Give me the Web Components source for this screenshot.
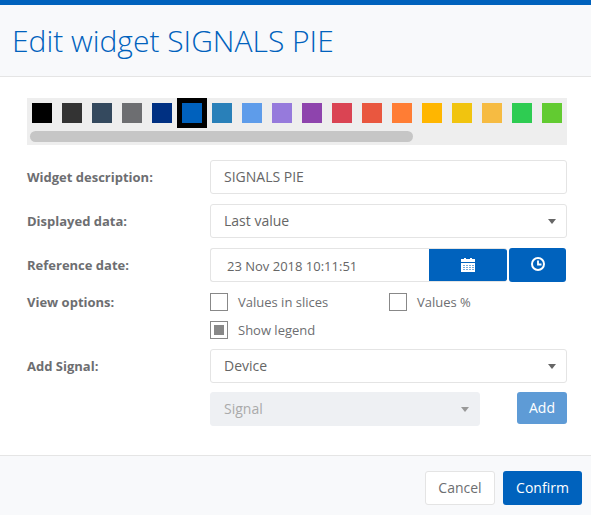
<!DOCTYPE html>
<html lang="en"><head><meta charset="utf-8"><title>Edit widget</title>
<style>
html,body{margin:0;padding:0;background:#fff;font-family:"Open Sans","Liberation Sans",sans-serif;color:#6d6e71;overflow:hidden}
</style></head><body>
<edit-dialog>
  <span slot="title">Edit widget SIGNALS PIE</span>
  <color-strip></color-strip>
  <form-row label="Widget description:"><text-box value="SIGNALS PIE"></text-box></form-row>
  <form-row label="Displayed data:"><select-box value="Last value"></select-box></form-row>
  <form-row label="Reference date:"><date-picker value="23 Nov 2018 10:11:51"></date-picker></form-row>
  <form-row label="View options:" compact><view-options></view-options></form-row>
  <form-row label="Add Signal:" tight><select-box value="Device"></select-box></form-row>
  <form-row><signal-add></signal-add></form-row>
  <ui-button slot="footer" kind="plain">Cancel</ui-button>
  <ui-button slot="footer" kind="primary">Confirm</ui-button>
</edit-dialog>
<script>
function def(name, css, html){
  customElements.define(name, class extends HTMLElement{
    connectedCallback(){
      if(this.shadowRoot) return;
      const r=this.attachShadow({mode:'open'});
      const body = typeof html==='function'?html(this):html;
      r.innerHTML='<style>'+css+'</style>'+body;
    }
  });
}
const BOX='box-sizing:border-box;background:#fff;border:1px solid #e4e4e4;border-radius:3px;';
def('edit-dialog',`
:host{display:flex;flex-direction:column;width:591px;height:515px;box-sizing:border-box;border-top:5px solid #0062bd}
header{height:72px;box-sizing:border-box;background:#f8f9fb;border-bottom:1px solid #e5e5e5;padding:14px 12px 0;font-weight:300;font-size:30px;line-height:43px;color:#0062bd;white-space:nowrap}
main{flex:1;padding:21px 24px 0 27px;min-height:0}
footer{height:60px;box-sizing:border-box;background:#f8f9fb;border-top:1px solid #e5e5e5;padding:15px 9px 0 0;display:flex;justify-content:flex-end;gap:8px}
`,`<header><slot name="title"></slot></header><main><slot></slot></main><footer><slot name="footer"></slot></footer>`);

const colors=['#000000','#333333','#34495e','#6d6e71','#003082','#0061bd','#2980b9','#5e9cea','#967adc','#8e44ad','#da4453','#e9573f','#ff7d34','#ffb600','#f1c40f','#f6bb42','#2ecc52','#62cb31'];
def('color-strip',`
:host{display:block;height:47px;background:#eee;margin-bottom:15px;overflow:hidden}
.row{display:flex;gap:10px;padding:5px 0 0 5px;height:20px}
i{display:block;flex:none;width:20px;height:20px}
i.sel{outline:5px solid #000}
.track{padding:8px 0 0 3px}
.thumb{width:383px;height:11px;border-radius:6px;background:#c6c6c6}
`,()=>`<div class="row">${colors.map((c,i)=>`<i class="${i==5?'sel':''}" style="background:${c}"></i>`).join('')}</div><div class="track"><div class="thumb"></div></div>`);

def('form-row',`
:host{display:grid;grid-template-columns:183px 357px;margin-bottom:10px}
:host([tight]){margin-bottom:9px}
.l{font-size:13px;font-weight:700;line-height:34px;color:#6d6e71;white-space:nowrap}
:host([compact]) .l{line-height:20px}
`,h=>`<div class="l">${h.getAttribute('label')||''}</div><div><slot></slot></div>`);

def('text-box',`
:host{display:block;${BOX}height:34px;padding:0 13px;font-size:14px;line-height:32px;color:#666}
`,h=>h.getAttribute('value'));

const caret=`<svg width="8" height="5" viewBox="0 0 8 5"><path d="M0 0h8L4 5z" fill="#666"/></svg>`;
def('select-box',`
:host{display:flex;align-items:center;justify-content:space-between;${BOX}height:34px;padding:0 10px 2px 13px;font-size:14px;color:#666}
:host([disabled]){background:#eef0f3;border-color:#eef0f3;color:#aaa}
:host([disabled]) svg path{fill:#999}
svg{margin-top:2px}
`,h=>`<span>${h.getAttribute('value')}</span>${caret}`);

const dots=[];
for(const y of [7,9,11]) for(const x of [2,5,8,11]) dots.push(`<rect x="${x}" y="${y}" width="2" height="1" fill="#0062bd" opacity=".55"/>`);
def('date-picker',`
:host{display:flex;height:34px;font-size:13px;color:#666;gap:2px}
.f{display:flex;flex:none;width:297px;height:34px;${BOX}border-right:0;overflow:hidden}
.v{flex:1;padding-left:16px;line-height:34px}
.b{background:#0062bd;display:flex;align-items:center;justify-content:center;color:#fff;box-sizing:border-box}
.cal{width:78px;margin:-1px 0;border-radius:0 3px 3px 0;height:34px}
.clk{width:57px;height:34px;border-radius:3px;padding-bottom:2px}
`,h=>`<div class="f"><div class="v">${h.getAttribute('value')}</div><div class="b cal">
<svg width="14" height="14" viewBox="0 0 14 14"><path fill="#fff" d="M3 0h2v1h4V0h2v1h3v3H0V1h3z"/><rect y="5" width="14" height="9" fill="#fff"/>${dots.join('')}</svg>
</div></div><div class="b clk"><svg width="14" height="14" viewBox="0 0 14 14"><circle cx="7" cy="7" r="6" fill="none" stroke="#fff" stroke-width="2"/><path d="M7 3.500V7.500H10.500" fill="none" stroke="#fff" stroke-width="1.800"/></svg></div>`);

def('check-opt',`
:host{display:flex;align-items:center;gap:10px;height:18px;font-size:13px;color:#6d6e71;white-space:nowrap}
b{display:flex;align-items:center;justify-content:center;box-sizing:border-box;width:18px;height:18px;border:1px solid #888;background:#fff}
:host([checked]) b::after{content:"";width:10px;height:10px;background:#888}
`,`<b></b><span><slot></slot></span>`);

def('view-options',`
:host{display:grid;grid-template-columns:179px 178px;row-gap:10px;padding-top:1px}
`,`<check-opt>Values in slices</check-opt><check-opt>Values %</check-opt><check-opt checked>Show legend</check-opt>`);

def('signal-add',`
:host{display:flex;justify-content:space-between;align-items:flex-start}
select-box{width:270px}
`,`<select-box disabled value="Signal"></select-box><ui-button kind="add">Add</ui-button>`);

def('ui-button',`
:host{display:flex;align-items:center;justify-content:center;box-sizing:border-box;height:34px;border-radius:3px;font-size:14px;padding-bottom:2px}
:host([kind=plain]){width:70px;background:#fff;border:1px solid #e4e4e4;color:#6d6e71}
:host([kind=primary]){width:79px;background:#0062bd;color:#fff}
:host([kind=add]){width:50px;height:32px;background:#5e9bd6;color:#fff}
`,`<slot></slot>`);
</script>
</body></html>
